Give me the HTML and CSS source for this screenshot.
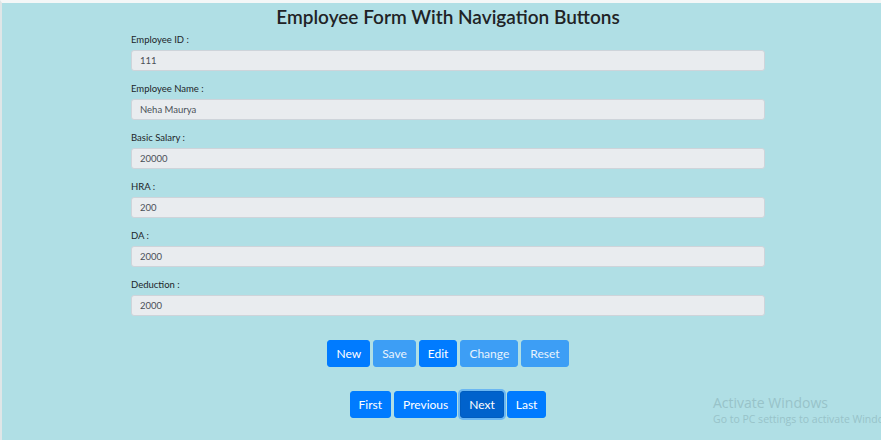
FILE: index.html
```html
<!DOCTYPE html>
<html>
<head>
<meta charset="utf-8">
<link rel="stylesheet" href="styles.css">
</head>
<body>
<div class="screen">
  <div class="page">
    <h1 class="title">Employee Form With Navigation Buttons</h1>
    <form class="form">
      <div class="field">
        <label class="label">Employee ID :</label>
        <input class="input" type="text" value="111" readonly>
      </div>
      <div class="field">
        <label class="label">Employee Name :</label>
        <input class="input" type="text" value="Neha Maurya" readonly>
      </div>
      <div class="field">
        <label class="label">Basic Salary :</label>
        <input class="input" type="text" value="20000" readonly>
      </div>
      <div class="field">
        <label class="label">HRA :</label>
        <input class="input" type="text" value="200" readonly>
      </div>
      <div class="field">
        <label class="label">DA :</label>
        <input class="input" type="text" value="2000" readonly>
      </div>
      <div class="field">
        <label class="label">Deduction :</label>
        <input class="input" type="text" value="2000" readonly>
      </div>
      <div class="btn-row actions">
        <button type="button" class="btn">New</button>
        <button type="button" class="btn btn-disabled">Save</button>
        <button type="button" class="btn">Edit</button>
        <button type="button" class="btn btn-disabled">Change</button>
        <button type="button" class="btn btn-disabled">Reset</button>
      </div>
      <div class="btn-row nav">
        <button type="button" class="btn">First</button>
        <button type="button" class="btn">Previous</button>
        <button type="button" class="btn btn-active">Next</button>
        <button type="button" class="btn">Last</button>
      </div>
    </form>
  </div>
  <div class="watermark">
    <div class="wm-title">Activate Windows</div>
    <div class="wm-sub">Go to PC settings to activate Windows.</div>
  </div>
</div>
</body>
</html>
```
FILE: styles.css
```css
html, body {
  margin: 0;
  padding: 0;
  background: #ffffff;
}
body {
  font-family: Lato, "Open Sans", sans-serif;
  color: #212529;
}
.screen {
  position: relative;
  width: 881px;
  height: 440px;
  overflow: hidden;
  background: #b0dfe5;
  border-top: 3px solid #f4f7f7;
  border-left: 2px solid #dfe6e7;
  box-sizing: border-box;
}
.page {
  padding-left: 13px;
}
.title {
  margin: 0;
  padding-top: 3px;
  text-align: center;
  font-size: 19px;
  font-weight: 600;
  line-height: 22px;
  color: #1f2326;
}
.form {
  width: 634px;
  margin: 0 auto;
  padding-top: 5px;
}
.field {
  display: flex;
  flex-direction: column;
  margin-bottom: 11px;
}
.label {
  font-size: 9.5px;
  line-height: 13px;
  color: #212529;
  margin-bottom: 4px;
}
.input {
  box-sizing: border-box;
  height: 21px;
  width: 100%;
  padding: 0 8px;
  font-family: inherit;
  font-size: 9.5px;
  color: #495057;
  background: #e9ecef;
  border: 1px solid #ced4da;
  border-radius: 3px;
  outline: none;
}
.btn-row {
  display: flex;
  justify-content: center;
  gap: 3px;
}
.actions {
  margin-top: 24px;
}
.nav {
  margin-top: 24px;
}
.btn {
  height: 27px;
  padding: 0 8px;
  font-family: inherit;
  font-size: 12px;
  color: #ffffff;
  background: #007bff;
  border: 1px solid #007bff;
  border-radius: 3px;
}
.btn-disabled {
  background: #3d9ef5;
  border-color: #3d9ef5;
  color: #e8f3fd;
}
.btn-active {
  background: #0062cc;
  border-color: #005cbf;
  box-shadow: 0 0 0 2px rgba(38, 143, 255, 0.5);
}
.watermark {
  position: absolute;
  left: 711px;
  top: 391px;
  color: #98c3c9;
  white-space: nowrap;
  font-family: "Open Sans", "Noto Sans", sans-serif;
}
.wm-title {
  font-size: 14px;
  line-height: 18px;
}
.wm-sub {
  font-size: 10.5px;
  line-height: 14px;
}
```
